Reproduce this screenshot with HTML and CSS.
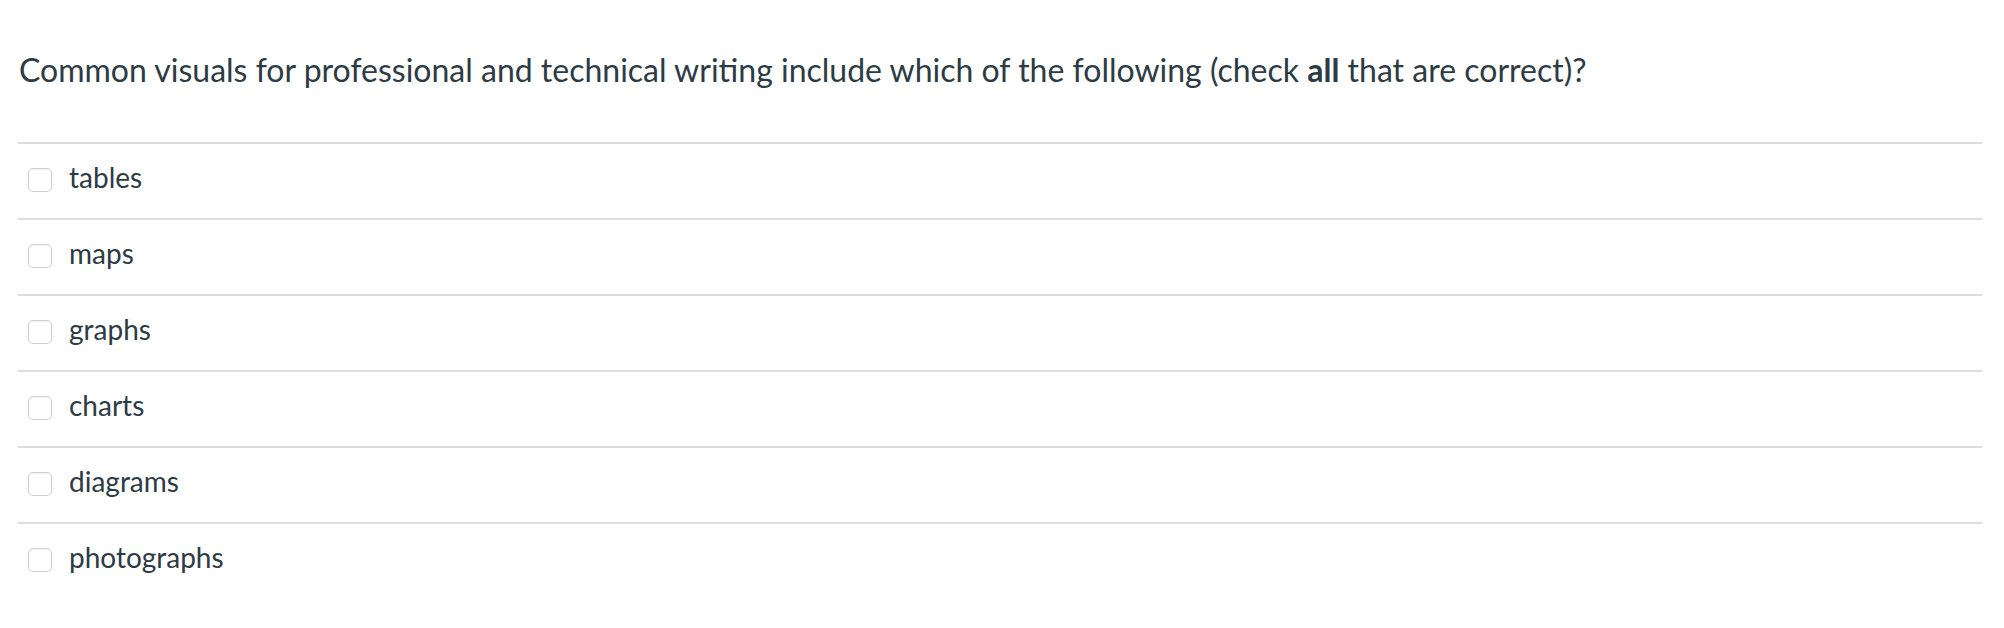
FILE: index.html
```html
<!DOCTYPE html>
<html lang="en">
<head>
<meta charset="utf-8">
<title>Question</title>
<link rel="stylesheet" href="styles.css">
</head>
<body>
<div class="question">
  <div class="question-text">Common visuals for professional and technical writing include which of the following (check <strong>all</strong> that are correct)?</div>
  <div class="answers">
    <label class="answer"><span class="box"></span><span class="label">tables</span></label>
    <label class="answer"><span class="box"></span><span class="label">maps</span></label>
    <label class="answer"><span class="box"></span><span class="label">graphs</span></label>
    <label class="answer"><span class="box"></span><span class="label">charts</span></label>
    <label class="answer"><span class="box"></span><span class="label">diagrams</span></label>
    <label class="answer"><span class="box"></span><span class="label">photographs</span></label>
  </div>
</div>
</body>
</html>
```
FILE: styles.css
```css
html, body {
  margin: 0;
  padding: 0;
  background: #fff;
}
body {
  font-family: Lato, "Open Sans", sans-serif;
  color: #2d3b45;
}
.question {
  padding: 0 22px 0 18px;
}
.question-text {
  font-size: 32px;
  line-height: 40px;
  padding: 50px 0 52px 1px;
}
.question-text strong {
  font-weight: 700;
}
.answers {
  border-top: 2px solid #dddddd;
}
.answer {
  display: flex;
  align-items: center;
  height: 74px;
  border-bottom: 2px solid #dddddd;
  padding-left: 10px;
  gap: 17px;
}
.answer:last-child {
  border-bottom: none;
}
.box {
  width: 22px;
  height: 22px;
  border: 1px solid #cfcfcf;
  border-radius: 5px;
  box-shadow: inset 0 1px 1px rgba(0,0,0,0.05);
  flex: none;
  margin-top: -2px;
}
.label {
  font-size: 28px;
  line-height: 34px;
  padding-bottom: 8px;
}
```
